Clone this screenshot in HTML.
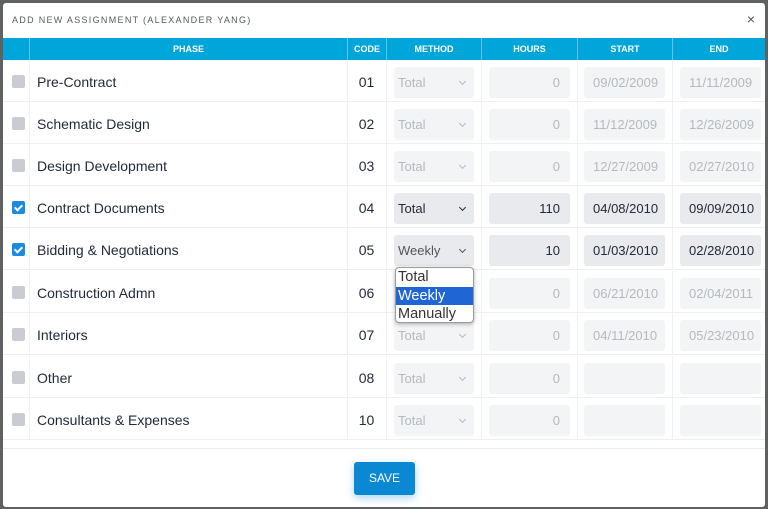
<!DOCTYPE html>
<html><head><style>
*{box-sizing:border-box;margin:0;padding:0}
body{width:768px;height:509px;background:#5f6163;position:relative;overflow:hidden;font-family:"Liberation Sans",sans-serif}
.modal{position:absolute;left:3px;top:3px;width:762px;height:504px;background:#fff;border-radius:3px;overflow:hidden}
.title{position:absolute;left:9px;top:12px;font-size:9px;letter-spacing:1.3px;color:#555a60}
.x{position:absolute;right:10px;top:8px;font-size:14px;color:#555}
.hdr{position:absolute;left:0;top:35px;width:762px;height:22px;background:#00a5d9}
.hc{position:absolute;top:0;height:22px;line-height:22px;color:#fff;font-size:9px;font-weight:bold;text-align:center;border-left:1px solid #5cc6e8}
.row{position:absolute;left:0;width:762px;height:42px;border-bottom:1px solid #eef0f2}
.cb{position:absolute;left:9px;top:15px;width:13px;height:13px;border-radius:2px;background:#c9cdd3}
.cb.on{background:#1a8be0}
.cb.on:after{content:"";position:absolute;left:4px;top:1.5px;width:3px;height:6px;border:solid #fff;border-width:0 2px 2px 0;transform:rotate(45deg)}
.ph{position:absolute;left:34px;top:14px;font-size:14px;color:#222b3a}
.cd{position:absolute;left:344px;width:39px;top:14px;font-size:14px;color:#222b3a;text-align:center}
.vl{position:absolute;top:0;height:42px;border-left:1px solid #f0f1f3}
.in{position:absolute;top:7px;height:31px;background:#f3f4f6;border-radius:3px;font-size:13px;line-height:31px;color:#b4b9bf;padding:0 6px}
.on2 .in{background:#e8eaed;color:#222b3a}
.m{left:391px;width:80px;padding-left:4px}
.m:after{content:"";position:absolute;right:9px;top:12px;width:4px;height:4px;border:solid currentColor;border-width:0 1.3px 1.3px 0;transform:rotate(45deg)}
.h{left:486px;width:81px;text-align:right;padding-right:10px}
.s{left:581px;width:81px;padding-left:9px}
.e{left:677px;width:81px;padding-left:9px}
.dd{position:absolute;background:#fff;border:1px solid #9a9a9a;border-radius:4px;box-shadow:0 1px 4px rgba(0,0,0,.3);font-size:14.5px;color:#333;overflow:hidden}
.dd div{height:18.5px;line-height:18px;padding-left:2px}
.dd .sel{background:#1f66d4;color:#fff}
.foot{position:absolute;left:0;top:445px;width:762px;border-top:1px solid #eceef0}
.save{position:absolute;left:351px;top:459px;width:61px;height:33px;background:#0a88d2;color:#fff;font-size:12px;text-align:center;line-height:33px;border-radius:3px;box-shadow:0 3px 8px rgba(10,136,210,.35)}
</style></head><body>
<div class="modal">
<div class="title">ADD NEW ASSIGNMENT (ALEXANDER YANG)</div>
<div class="x">×</div>
<div class="hdr">
<div class="hc" style="left:0;width:26px;border-left:0"></div>
<div class="hc" style="left:26px;width:318px">PHASE</div>
<div class="hc" style="left:344px;width:39px">CODE</div>
<div class="hc" style="left:383px;width:95px">METHOD</div>
<div class="hc" style="left:478px;width:96px">HOURS</div>
<div class="hc" style="left:574px;width:95px">START</div>
<div class="hc" style="left:669px;width:93px">END</div>
</div>

<div class="row" style="top:57px"><div class="vl" style="left:26px"></div><div class="vl" style="left:344px"></div><div class="vl" style="left:383px"></div><div class="vl" style="left:478px"></div><div class="vl" style="left:574px"></div><div class="vl" style="left:669px"></div><div class="cb"></div><div class="ph">Pre-Contract</div><div class="cd">01</div><div class="in m">Total</div><div class="in h">0</div><div class="in s">09/02/2009</div><div class="in e">11/11/2009</div></div>
<div class="row" style="top:99px"><div class="vl" style="left:26px"></div><div class="vl" style="left:344px"></div><div class="vl" style="left:383px"></div><div class="vl" style="left:478px"></div><div class="vl" style="left:574px"></div><div class="vl" style="left:669px"></div><div class="cb"></div><div class="ph">Schematic Design</div><div class="cd">02</div><div class="in m">Total</div><div class="in h">0</div><div class="in s">11/12/2009</div><div class="in e">12/26/2009</div></div>
<div class="row" style="top:141px"><div class="vl" style="left:26px"></div><div class="vl" style="left:344px"></div><div class="vl" style="left:383px"></div><div class="vl" style="left:478px"></div><div class="vl" style="left:574px"></div><div class="vl" style="left:669px"></div><div class="cb"></div><div class="ph">Design Development</div><div class="cd">03</div><div class="in m">Total</div><div class="in h">0</div><div class="in s">12/27/2009</div><div class="in e">02/27/2010</div></div>
<div class="row on2" style="top:183px"><div class="vl" style="left:26px"></div><div class="vl" style="left:344px"></div><div class="vl" style="left:383px"></div><div class="vl" style="left:478px"></div><div class="vl" style="left:574px"></div><div class="vl" style="left:669px"></div><div class="cb on"></div><div class="ph">Contract Documents</div><div class="cd">04</div><div class="in m">Total</div><div class="in h">110</div><div class="in s">04/08/2010</div><div class="in e">09/09/2010</div></div>
<div class="row on2" style="top:225px"><div class="vl" style="left:26px"></div><div class="vl" style="left:344px"></div><div class="vl" style="left:383px"></div><div class="vl" style="left:478px"></div><div class="vl" style="left:574px"></div><div class="vl" style="left:669px"></div><div class="cb on"></div><div class="ph">Bidding &amp; Negotiations</div><div class="cd">05</div><div class="in m" style="color:#555">Weekly</div><div class="in h">10</div><div class="in s">01/03/2010</div><div class="in e">02/28/2010</div></div>
<div class="row" style="top:268px"><div class="vl" style="left:26px"></div><div class="vl" style="left:344px"></div><div class="vl" style="left:383px"></div><div class="vl" style="left:478px"></div><div class="vl" style="left:574px"></div><div class="vl" style="left:669px"></div><div class="cb"></div><div class="ph">Construction Admn</div><div class="cd">06</div><div class="in m">Total</div><div class="in h">0</div><div class="in s">06/21/2010</div><div class="in e">02/04/2011</div></div>
<div class="row" style="top:310px"><div class="vl" style="left:26px"></div><div class="vl" style="left:344px"></div><div class="vl" style="left:383px"></div><div class="vl" style="left:478px"></div><div class="vl" style="left:574px"></div><div class="vl" style="left:669px"></div><div class="cb"></div><div class="ph">Interiors</div><div class="cd">07</div><div class="in m">Total</div><div class="in h">0</div><div class="in s">04/11/2010</div><div class="in e">05/23/2010</div></div>
<div class="row" style="top:353px"><div class="vl" style="left:26px"></div><div class="vl" style="left:344px"></div><div class="vl" style="left:383px"></div><div class="vl" style="left:478px"></div><div class="vl" style="left:574px"></div><div class="vl" style="left:669px"></div><div class="cb"></div><div class="ph">Other</div><div class="cd">08</div><div class="in m">Total</div><div class="in h">0</div><div class="in s"></div><div class="in e"></div></div>
<div class="row" style="top:395px"><div class="vl" style="left:26px"></div><div class="vl" style="left:344px"></div><div class="vl" style="left:383px"></div><div class="vl" style="left:478px"></div><div class="vl" style="left:574px"></div><div class="vl" style="left:669px"></div><div class="cb"></div><div class="ph">Consultants &amp; Expenses</div><div class="cd">10</div><div class="in m">Total</div><div class="in h">0</div><div class="in s"></div><div class="in e"></div></div>

<div class="dd" style="left:392px;top:264px;width:79px;height:56px"><div>Total</div><div class="sel">Weekly</div><div>Manually</div></div>
<div class="foot"></div>
<div class="save">SAVE</div>
</div>
</body></html>
